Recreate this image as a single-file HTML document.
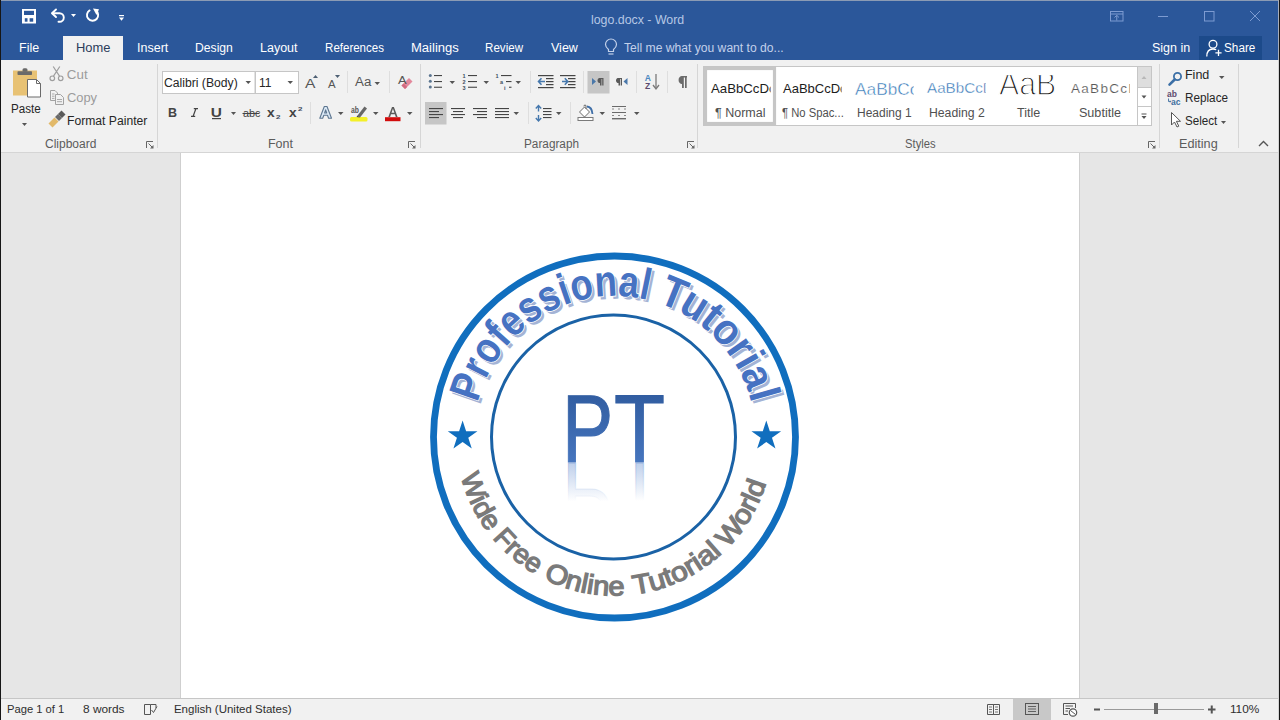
<!DOCTYPE html>
<html><head><meta charset="utf-8">
<style>
*{margin:0;padding:0;box-sizing:border-box}
html,body{width:1280px;height:720px;overflow:hidden;background:#e6e6e6;font-family:"Liberation Sans",sans-serif}
.a{position:absolute}
svg text{font-family:"Liberation Sans",sans-serif;white-space:pre}
</style></head><body>
<div class="a" style="left:0;top:0;width:1280px;height:60px;background:#2b579a"></div>
<div class="a" style="left:0;top:0;width:1280px;height:1px;background:#8b9bb4"></div>
<div class="a" style="left:0;top:60px;width:1280px;height:93px;background:#f1f1f1;border-bottom:1px solid #d5d5d5"></div>
<div class="a" style="left:180px;top:153px;width:900px;height:545px;background:#fff;border-left:1px solid #cfcfcf;border-right:1px solid #cfcfcf"></div>
<div class="a" style="left:0;top:698px;width:1280px;height:22px;background:#f1f1f1;border-top:1px solid #c6c6c6"></div>
<div class="a" style="left:63px;top:36px;width:60px;height:24px;background:#f1f1f1"></div>
<div class="a" style="left:1199px;top:36px;width:63px;height:24px;background:#1c4a8a"></div>
<div class="a" style="left:1013px;top:699px;width:38px;height:21px;background:#c8c8c8"></div>
<div class="a" style="left:0;top:0;width:1px;height:720px;background:#161616"></div>
<div class="a" style="left:1278px;top:0;width:1px;height:60px;background:#a6adbb"></div><div class="a" style="left:1278px;top:60px;width:1px;height:660px;background:#d4d4d4"></div>
<div class="a" style="left:1279px;top:0;width:1px;height:720px;background:#161616"></div>
<svg class="a" style="left:0;top:0" width="1280" height="720" viewBox="0 0 1280 720">
<defs>
<linearGradient id="ptg" x1="0" y1="0" x2="0" y2="1">
<stop offset="0" stop-color="#2b5698"/><stop offset="1" stop-color="#4c7cc6"/>
</linearGradient>
<linearGradient id="ptr" x1="0" y1="0" x2="0" y2="1">
<stop offset="0" stop-color="#5a86cc" stop-opacity="0"/><stop offset="0.45" stop-color="#5a86cc" stop-opacity="0"/><stop offset="1" stop-color="#5a86cc" stop-opacity="0.6"/>
</linearGradient>
<path id="arcTop" d="M477.69,402.89 A141,141 0 0 1 753.36,412.52"/>
<path id="arcBot" d="M460.91,476.15 A158.5,158.5 0 0 0 770.59,464.52"/>
</defs>
<circle cx="614.5" cy="437" r="181" fill="none" stroke="#106ebe" stroke-width="6.8"/>
<circle cx="613.5" cy="437" r="122" fill="none" stroke="#1a62a6" stroke-width="3"/>
<polygon fill="#106ebe" points="462.60,420.40 466.10,431.18 477.44,431.18 468.27,437.84 471.77,448.62 462.60,441.96 453.43,448.62 456.93,437.84 447.76,431.18 459.10,431.18"/>
<polygon fill="#106ebe" points="766.30,420.40 769.80,431.18 781.14,431.18 771.97,437.84 775.47,448.62 766.30,441.96 757.13,448.62 760.63,437.84 751.46,431.18 762.80,431.18"/>
<g transform="translate(2.8,2.8)"><text font-family="Liberation Sans" font-weight="bold" font-size="44" fill="#a4b3d5"><textPath href="#arcTop" startOffset="0.0" textLength="220.7" lengthAdjust="spacingAndGlyphs">Professional</textPath></text><text font-family="Liberation Sans" font-weight="bold" font-size="44" fill="#a4b3d5"><textPath href="#arcTop" startOffset="230.1" textLength="144.0" lengthAdjust="spacingAndGlyphs">Tutorial</textPath></text></g>
<text font-family="Liberation Sans" font-weight="bold" font-size="44" fill="#4672c2" stroke="#fff" stroke-width="1.6" paint-order="stroke"><textPath href="#arcTop" startOffset="0.0" textLength="220.7" lengthAdjust="spacingAndGlyphs">Professional</textPath></text><text font-family="Liberation Sans" font-weight="bold" font-size="44" fill="#4672c2" stroke="#fff" stroke-width="1.6" paint-order="stroke"><textPath href="#arcTop" startOffset="230.1" textLength="144.0" lengthAdjust="spacingAndGlyphs">Tutorial</textPath></text>
<text font-family="Liberation Sans" font-size="27" fill="#7a7a7a" stroke="#7a7a7a" stroke-width="1.3"><textPath href="#arcBot" startOffset="0.0" textLength="126.5" lengthAdjust="spacingAndGlyphs">Wide Free</textPath></text><text font-family="Liberation Sans" font-size="27" fill="#7a7a7a" stroke="#7a7a7a" stroke-width="1.3"><textPath href="#arcBot" startOffset="135.5" textLength="84" lengthAdjust="spacingAndGlyphs">Online</textPath></text><text font-family="Liberation Sans" font-size="27" fill="#7a7a7a" stroke="#7a7a7a" stroke-width="1.3"><textPath href="#arcBot" startOffset="229" textLength="99" lengthAdjust="spacingAndGlyphs">Tutorial</textPath></text><text font-family="Liberation Sans" font-size="27" fill="#7a7a7a" stroke="#7a7a7a" stroke-width="1.3"><textPath href="#arcBot" startOffset="335.0" textLength="76.6" lengthAdjust="spacingAndGlyphs">World</textPath></text>
<text transform="translate(568.3,461.5) scale(0.8,1)" x="-8" y="0" font-family="Liberation Sans" font-size="96" fill="url(#ptg)" stroke="url(#ptg)" stroke-width="1.1">P</text>
<text transform="translate(614,461.5) scale(0.87,1)" x="0" y="0" font-family="Liberation Sans" font-size="96" fill="url(#ptg)" stroke="url(#ptg)" stroke-width="1.1">T</text>
<g transform="translate(0,924) scale(1,-1)">
<text transform="translate(568.3,461.5) scale(0.8,1)" x="-8" y="0" font-family="Liberation Sans" font-size="96" fill="url(#ptr)" stroke="url(#ptr)" stroke-width="1.1">P</text>
<text transform="translate(614,461.5) scale(0.87,1)" x="0" y="0" font-family="Liberation Sans" font-size="96" fill="url(#ptr)" stroke="url(#ptr)" stroke-width="1.1">T</text>
</g>
</svg>
<svg class="a" style="left:0;top:0" width="1280" height="720" viewBox="0 0 1280 720">
<defs><clipPath id="c711"><rect x="708" y="70" width="62.60000000000002" height="30"/></clipPath><clipPath id="c783"><rect x="780" y="70" width="61.60000000000002" height="30"/></clipPath><clipPath id="c855"><rect x="852" y="70" width="61.60000000000002" height="30"/></clipPath><clipPath id="c927"><rect x="924" y="70" width="61.5" height="30"/></clipPath><clipPath id="c999"><rect x="996" y="75.2" width="66" height="25"/></clipPath><clipPath id="c1071"><rect x="1068" y="70" width="61.799999999999955" height="30"/></clipPath></defs>
<g id="icons">
<!-- ===== QAT ===== -->
<g fill="#fff">
<rect x="22" y="9" width="14" height="14.5"/>
</g>
<g fill="#2b579a">
<rect x="24" y="10.8" width="10" height="4.2"/>
<rect x="24.8" y="18.2" width="2.7" height="3.5"/>
<rect x="29.6" y="18.2" width="3.6" height="3.5"/>
</g>
<g fill="none" stroke="#fff" stroke-width="1.9" stroke-linecap="round" stroke-linejoin="round">
<path d="M56,9.5 L52,13.2 L56,17"/>
<path d="M52.5,13.2 H59.5 A4.3,4.3 0 0 1 59.5,21.8 H58.5"/>
<path d="M95.8,10.6 A5.6,5.6 0 1 1 89.6,10.4"/>
</g>
<path fill="#fff" d="M93,8.5 L99,9.2 L96.5,15 Z"/>
<path fill="#fff" d="M71,14 H76 L73.5,17 Z"/>
<rect fill="#fff" x="119" y="15" width="5" height="1.2"/>
<path fill="#fff" d="M119,17.6 H124 L121.5,20.8 Z"/>
<!-- window controls -->
<g fill="none" stroke="#7d9bd1" stroke-width="1">
<rect x="1110.5" y="11.5" width="12.5" height="9.5"/>
<path d="M1110.5,14 H1123"/>
<path d="M1116.75,20.5 V15.5 M1114.5,17.5 L1116.75,15.3 L1119,17.5"/>
<path d="M1158,16.5 H1168"/>
<rect x="1204.5" y="11.5" width="9.5" height="9.5"/>
<path d="M1250,11 L1260,21 M1260,11 L1250,21"/>
</g>
<!-- lightbulb -->
<g fill="none" stroke="#c3d1ea" stroke-width="1.2">
<path d="M608.5,51.5 V49.5 C606,47.5 605.5,45.8 605.5,44.5 A5.5,5.5 0 0 1 616.5,44.5 C616.5,45.8 616,47.5 613.5,49.5 V51.5 Z"/>
<path d="M608.5,54 H613.5"/>
</g>
<!-- share person -->
<g fill="none" stroke="#fff" stroke-width="1.3">
<circle cx="1213" cy="44.3" r="3.9"/>
<path d="M1206.8,56.5 C1206.8,51.8 1209.3,49 1213,49 C1214.2,49 1215.3,49.3 1216.2,49.8"/>
<path d="M1218.5,49.8 V56 M1215.4,52.9 H1221.6"/>
</g>
<!-- ===== Clipboard group ===== -->
<rect x="13" y="70.5" width="24" height="25" fill="#e8c274"/>
<rect x="17.5" y="71.2" width="14.5" height="3.8" fill="#6a6a6a" rx="0.8"/>
<rect x="22.5" y="68.2" width="5" height="3.5" fill="#6a6a6a" rx="1.5"/>
<path d="M27.5,79.5 H36.5 L40.5,83.5 V97 H27.5 Z" fill="#fff" stroke="#6a6a6a" stroke-width="1"/>
<path d="M36.5,79.5 V83.5 H40.5" fill="none" stroke="#6a6a6a" stroke-width="1"/>
<path fill="#555" d="M22,123 H27 L24.5,126 Z"/>
<!-- scissors -->
<g fill="none" stroke="#9e9e9e" stroke-width="1.2">
<circle cx="52.3" cy="78.3" r="2.3"/>
<circle cx="60.7" cy="78.3" r="2.3"/>
<path d="M53.5,76.2 L59.8,66.5 M59.5,76.2 L53.2,66.5"/>
</g>
<!-- copy -->
<g fill="none" stroke="#a2a2a2" stroke-width="1">
<path d="M50.5,90.5 H55 L57.5,93 V100.5 H50.5 Z"/>
<path d="M55.5,94.5 H60.5 L63.5,97.5 V104.5 H55.5 Z" fill="#f1f1f1"/>
<path d="M52,94 H54.5 M52,96.2 H54.5 M52,98.4 H54.5 M57,99.5 H62 M57,101.7 H62" stroke-width="0.9"/>
</g>
<!-- format painter -->
<path d="M48.5,123.5 L54.5,117.5 L58.5,121.5 L52.5,127.5 Z" fill="#e2b96a"/>
<path d="M55,117 L58,114 L62,118 L59,121 Z" fill="#6a6a6a"/>
<path d="M58,114 L61.5,110.5 L65.5,114.5 L62,118 Z" fill="#5a5a5a"/>
<!-- ===== Font group ===== -->
<rect x="162.5" y="71.5" width="92.5" height="22" fill="#fff" stroke="#c6c6c6"/>
<rect x="255.5" y="71.5" width="43" height="22" fill="#fff" stroke="#c6c6c6"/>
<path fill="#555" d="M245.5,81 H251 L248.25,84 Z"/>
<path fill="#555" d="M287.5,81 H293 L290.25,84 Z"/>
<path fill="#4d5f73" d="M313,78 L315.5,75 L318,78 Z"/>
<path fill="#4d5f73" d="M335,75 H340 L337.5,78 Z"/>
<path fill="#555" d="M374.5,82 H380 L377.25,85 Z"/>
<!-- eraser -->
<path d="M401.5,85.5 L409,78 L412.5,81.5 L405,89 Z" fill="#e3889b"/>
<path d="M401.5,85.5 L403.6,83.4 L407.1,86.9 L405,89 Z" fill="#d16a80"/>
<!-- text effects A -->
<path d="M319.8,118.3 L324.3,106.5 H327 L331.5,118.3 H328.6 L327.5,115.3 H323.8 L322.7,118.3 Z M324.6,113 H326.7 L325.65,109.8 Z" fill="#dbe9f6" stroke="#5d7690" stroke-width="1.1" stroke-linejoin="round"/>
<!-- highlighter -->
<rect x="350" y="117" width="17.5" height="4.5" fill="#f4f028" rx="1.5"/>
<path d="M357.5,115.5 L364.5,106.5 L367,108.5 L360,117.5 Z" fill="#676767"/>
<path d="M356.5,117 L357.5,115.5 L360,117.5 Z" fill="#444"/>
<!-- font color -->
<rect x="385" y="117.2" width="15.5" height="4" fill="#d20c0c"/>
<path d="M388.3,117 L392,107 H393.9 L397.6,117 H395.8 L394.9,114.2 H391 L390.1,117 Z M391.5,112.7 H394.4 L392.95,108.7 Z" fill="#5a5a5a"/>
<!-- arrows row 2 -->
<g fill="#555">
<path d="M231,112 H236 L233.5,115 Z"/>
<path d="M338,112 H343.5 L340.75,115 Z"/>
<path d="M373,112 H378.5 L375.75,115 Z"/>
<path d="M407,112 H412.5 L409.75,115 Z"/>
</g>
<path d="M193.8,108.6 H198 M195.9,108.6 L193.1,116.4 M191,116.4 H195.2" fill="none" stroke="#444" stroke-width="1.3"/>
<!-- strikethrough line / underline -->
<rect x="212" y="118" width="9" height="1.2" fill="#444"/>
<rect x="242.5" y="113" width="17" height="1" fill="#444"/>
<!-- separators -->
<g fill="#d6d6d6">
<rect x="157" y="64" width="1" height="84"/>
<rect x="420" y="64" width="1" height="84"/>
<rect x="697" y="64" width="1" height="84"/>
<rect x="1159" y="64" width="1" height="84"/>
<rect x="1238" y="64" width="1" height="84"/>
</g>
<g fill="#dedede">
<rect x="347" y="71" width="1" height="22"/>
<rect x="389" y="71" width="1" height="22"/>
<rect x="310" y="102" width="1" height="22"/>
<rect x="530" y="71" width="1" height="22"/>
<rect x="583" y="71" width="1" height="22"/>
<rect x="636" y="71" width="1" height="22"/>
<rect x="667" y="71" width="1" height="22"/>
<rect x="528" y="102" width="1" height="22"/>
<rect x="570" y="102" width="1" height="22"/>
</g>
<!-- dialog launchers -->
<g fill="none" stroke="#666" stroke-width="1">
<path d="M146.5,148 V141.5 H153"/><path d="M148.5,143.5 L153,148"/>
<path d="M408.5,148 V141.5 H415"/><path d="M410.5,143.5 L415,148"/>
<path d="M687.5,148 V141.5 H694"/><path d="M689.5,143.5 L694,148"/>
<path d="M1148.5,148 V141.5 H1155"/><path d="M1150.5,143.5 L1155,148"/>
</g>
<g fill="#666">
<path d="M150,148.5 H153.5 V145 Z"/><path d="M412,148.5 H415.5 V145 Z"/><path d="M691,148.5 H694.5 V145 Z"/><path d="M1152,148.5 H1155.5 V145 Z"/>
</g>
<path d="M1259,146 L1263.5,141.5 L1268,146" fill="none" stroke="#555" stroke-width="1.4"/>
<!-- ===== Paragraph group ===== -->
<g fill="#5b7590">
<circle cx="430.3" cy="75.5" r="1.5"/><circle cx="430.3" cy="81.3" r="1.5"/><circle cx="430.3" cy="87.1" r="1.5"/>
</g>
<g fill="#454545">
<rect x="434" y="75" width="8" height="1.1"/><rect x="434" y="81" width="8" height="1.1"/><rect x="434" y="86.7" width="8" height="1.1"/>
<rect x="468" y="75" width="9" height="1.1"/><rect x="468" y="81" width="9" height="1.1"/><rect x="468" y="86.7" width="9" height="1.1"/>
<rect x="501" y="75" width="10.5" height="1.1"/><rect x="506" y="81" width="5.5" height="1.1"/><rect x="509" y="86.7" width="2.5" height="1.1"/>
</g>
<g font-size="5.5" fill="#3d4d5e" font-weight="bold">
<text x="462.5" y="78.3">1</text><text x="462.5" y="84.2">2</text><text x="462.5" y="90">3</text>
<text x="495.5" y="78.3">1</text><text x="500" y="84.2">a</text><text x="504" y="90">i</text>
</g>
<g fill="#555">
<path d="M449.5,81 H455 L452.25,84 Z"/><path d="M483.5,81 H489 L486.25,84 Z"/><path d="M515.5,81 H521 L518.25,84 Z"/>
</g>
<!-- indents -->
<g fill="#454545">
<rect x="538" y="75" width="15.5" height="1.2"/><rect x="546" y="78" width="7.5" height="1.2"/><rect x="546" y="81" width="7.5" height="1.2"/><rect x="546" y="84" width="7.5" height="1.2"/><rect x="538" y="87" width="15.5" height="1.2"/>
<rect x="560" y="75" width="15.5" height="1.2"/><rect x="568" y="78" width="7.5" height="1.2"/><rect x="568" y="81" width="7.5" height="1.2"/><rect x="568" y="84" width="7.5" height="1.2"/><rect x="560" y="87" width="15.5" height="1.2"/>
</g>
<g fill="none" stroke="#4678ad" stroke-width="1.6">
<path d="M541.5,78.2 L538.5,81.5 L541.5,84.8 M539,81.5 H545"/>
<path d="M562,81.5 H568 M564.8,78.2 L567.8,81.5 L564.8,84.8"/>
</g>
<!-- LTR/RTL -->
<rect x="587.5" y="71" width="22" height="22.5" fill="#c6c6c6"/>
<path d="M592,78 L596,81.5 L592,85 Z" fill="#4a78aa"/>
<path d="M603.5,78 H599 A2.8,2.8 0 0 0 599,83 H600 V85.5 H601.5 V79 H602.2 V85.5 H603.5 Z" fill="#5a5a5a"/>
<path d="M622,78 H617.5 A2.8,2.8 0 0 0 617.5,83 H618.5 V85.5 H620 V79 H620.7 V85.5 H622 Z" fill="#5a5a5a"/>
<path d="M627.5,78 L623.5,81.5 L627.5,85 Z" fill="#4a78aa"/>
<!-- sort -->
<text x="644.8" y="80.8" font-size="8.5" font-weight="bold" fill="#4b87c0">A</text>
<text x="645" y="89" font-size="8.5" font-weight="bold" fill="#5a4a6e">Z</text>
<path d="M656,74 V88" stroke="#7a7a7a" stroke-width="1.3"/>
<path d="M653,85 L656,89 L659,85" fill="none" stroke="#7a7a7a" stroke-width="1.3"/>
<!-- pilcrow -->
<path d="M687,76 H681.5 A4.2,4.2 0 0 0 681.5,84 H682 V88 H683.8 V77.6 H685 V88 H686.7 V77.6 H687 Z" fill="#6b6b6b"/>
<!-- align row -->
<rect x="425" y="102" width="21.5" height="22.5" fill="#c6c6c6"/>
<g fill="#454545">
<rect x="429" y="108" width="14" height="1.1"/><rect x="429" y="111" width="10" height="1.1"/><rect x="429" y="114" width="14" height="1.1"/><rect x="429" y="117" width="10" height="1.1"/>
<rect x="451" y="108" width="14" height="1.1"/><rect x="453" y="111" width="10" height="1.1"/><rect x="451" y="114" width="14" height="1.1"/><rect x="453" y="117" width="10" height="1.1"/>
<rect x="473" y="108" width="14" height="1.1"/><rect x="477" y="111" width="10" height="1.1"/><rect x="473" y="114" width="14" height="1.1"/><rect x="477" y="117" width="10" height="1.1"/>
<rect x="495" y="108" width="14" height="1.1"/><rect x="495" y="111" width="14" height="1.1"/><rect x="495" y="114" width="14" height="1.1"/><rect x="495" y="117" width="14" height="1.1"/>
<rect x="543" y="108" width="8.5" height="1.1"/><rect x="543" y="111" width="8.5" height="1.1"/><rect x="543" y="114" width="8.5" height="1.1"/><rect x="543" y="117" width="8.5" height="1.1"/>
</g>
<g fill="#555">
<path d="M513.5,112 H519 L516.25,115 Z"/><path d="M556,112 H561.5 L558.75,115 Z"/><path d="M599.5,112 H605 L602.25,115 Z"/><path d="M634,112 H639.5 L636.75,115 Z"/>
</g>
<g fill="none" stroke="#4678ad" stroke-width="1.4">
<path d="M538.5,106 V111.5 M535.8,108.5 L538.5,105.5 L541.2,108.5 M538.5,115 V120.5 M535.8,118 L538.5,121 L541.2,118"/>
</g>
<!-- shading -->
<rect x="578" y="117.5" width="15" height="3" fill="#fff" stroke="#7a7a7a" stroke-width="1"/>
<path d="M579.5,112 L584.5,107 L589.5,112 L584.5,117 Z" fill="#fff" stroke="#6a6a6a" stroke-width="1"/>
<path d="M584,106.5 V105.5 A1.5,1.5 0 0 1 586,105.5 V109" fill="none" stroke="#6a6a6a" stroke-width="1"/>
<path d="M587,106.5 Q592,107 592.5,114" fill="none" stroke="#3f6fa8" stroke-width="1.8"/>
<!-- borders -->
<g fill="#6a6a6a">
<rect x="612" y="106" width="14" height="1"/>
<rect x="612" y="112" width="14" height="1"/>
<rect x="612" y="118" width="14" height="1.4"/>
</g>
<g fill="#8a8a8a">
<rect x="612" y="108.5" width="2" height="1"/><rect x="618" y="108.5" width="2" height="1"/><rect x="624" y="108.5" width="2" height="1"/>
<rect x="612" y="115" width="2" height="1"/><rect x="618" y="115" width="2" height="1"/><rect x="624" y="115" width="2" height="1"/>
</g>
<!-- ===== Styles gallery ===== -->
<rect x="703.5" y="66.5" width="448" height="59" fill="#fff" stroke="#c6c6c6"/>
<rect x="705.5" y="68.5" width="69" height="55" fill="none" stroke="#c6c6c6" stroke-width="3.2"/>
<rect x="1137" y="67" width="14" height="20" fill="#dedede"/>
<g fill="none" stroke="#c6c6c6" stroke-width="1">
<path d="M1137.5,67 V125 M1137,87.5 H1151 M1137,106.5 H1151"/>
</g>
<path fill="#b8b8b8" d="M1141.5,79 H1146.5 L1144,76 Z"/>
<path fill="#555" d="M1141.5,95.5 H1146.5 L1144,98.5 Z"/>
<rect x="1141.5" y="113.5" width="5" height="1" fill="#555"/>
<path fill="#555" d="M1141.5,116 H1146.5 L1144,119 Z"/>
<!-- ===== Editing ===== -->
<g fill="none" stroke="#3b6fa6">
<circle cx="1177.5" cy="76.5" r="3.6" stroke-width="1.8"/>
<path d="M1174.7,79.5 L1169.5,84.7" stroke-width="2.6" stroke-linecap="round"/>
</g>
<path fill="#555" d="M1219,76 H1224.5 L1221.75,79 Z"/>
<path fill="#555" d="M1221,121 H1226 L1223.5,124 Z"/>
<text x="1167" y="97" font-size="8.5" fill="#5f4b6e" font-weight="bold">ab</text>
<text x="1171" y="104.5" font-size="8.5" fill="#3f6fa0" font-weight="bold">ac</text>
<path d="M1168.5,98.5 V101.5 H1170.8 M1169.8,100.6 L1170.8,101.5 L1169.8,102.4" fill="none" stroke="#3f6fa0" stroke-width="0.9"/>
<path d="M1171.5,112.5 V125 L1174.5,122 L1177,127 L1178.8,126.2 L1176.4,121.3 L1180.5,121.3 Z" fill="#fff" stroke="#555" stroke-width="1" stroke-linejoin="round"/>
<!-- ===== Status bar ===== -->
<g fill="none" stroke="#555" stroke-width="1">
<path d="M144.5,704.5 H150.5 V714.5 H144.5 Z M150.5,704.5 H156 V708"/>
<path d="M151.5,710 L153.5,712.5 L157,706.5"/>
</g>
<g fill="none" stroke="#555" stroke-width="1">
<path d="M987.5,704.5 H993.5 V714.5 H987.5 Z M993.5,704.5 H999.5 V714.5 H993.5 Z"/>
<path d="M989,707 H992 M989,709.5 H992 M989,712 H992 M995,707 H998 M995,709.5 H998 M995,712 H998" stroke-width="0.8"/>
<rect x="1025.5" y="703.5" width="13" height="11"/>
<path d="M1028,706.5 H1036 M1028,709 H1036 M1028,711.5 H1036" stroke-width="0.9"/>
<path d="M1068,714.5 H1063.5 V703.5 H1075.5 V708"/>
<path d="M1065.5,706 H1073 M1065.5,708.5 H1070 M1065.5,711 H1068" stroke-width="1"/>
</g>
<circle cx="1073" cy="712.5" r="3.7" fill="#fff" stroke="#555" stroke-width="1.2"/>
<path d="M1070.5,710.5 L1075.5,714.5" stroke="#555" stroke-width="1"/>
<rect x="1094" y="708.5" width="6" height="2" fill="#555"/>
<rect x="1104" y="709" width="100" height="1" fill="#9a9a9a"/>
<rect x="1154" y="703" width="4" height="11" fill="#6a6a6a"/>
<rect x="1208" y="708.5" width="7.5" height="2" fill="#555"/>
<rect x="1210.75" y="705.5" width="2" height="8" fill="#555"/>
</g>

<text x="591.01" y="24" font-size="12.5" font-weight="normal" fill="#b6c7e5" textLength="93.25" lengthAdjust="spacingAndGlyphs">logo.docx - Word</text><text x="19.00" y="52" font-size="12.5" font-weight="normal" fill="#ffffff" textLength="20.16" lengthAdjust="spacingAndGlyphs">File</text><text x="75.97" y="52" font-size="12.5" font-weight="normal" fill="#2b3c5a" textLength="34.39" lengthAdjust="spacingAndGlyphs">Home</text><text x="137.00" y="52" font-size="12.5" font-weight="normal" fill="#ffffff" textLength="31.27" lengthAdjust="spacingAndGlyphs">Insert</text><text x="195.03" y="52" font-size="12.5" font-weight="normal" fill="#ffffff" textLength="37.87" lengthAdjust="spacingAndGlyphs">Design</text><text x="260.00" y="52" font-size="12.5" font-weight="normal" fill="#ffffff" textLength="37.53" lengthAdjust="spacingAndGlyphs">Layout</text><text x="325.08" y="52" font-size="12.5" font-weight="normal" fill="#ffffff" textLength="58.86" lengthAdjust="spacingAndGlyphs">References</text><text x="410.95" y="52" font-size="12.5" font-weight="normal" fill="#ffffff" textLength="47.94" lengthAdjust="spacingAndGlyphs">Mailings</text><text x="485.07" y="52" font-size="12.5" font-weight="normal" fill="#ffffff" textLength="37.93" lengthAdjust="spacingAndGlyphs">Review</text><text x="551.00" y="52" font-size="12.5" font-weight="normal" fill="#ffffff" textLength="26.88" lengthAdjust="spacingAndGlyphs">View</text><text x="624.00" y="52" font-size="12.5" font-weight="normal" fill="#c3d1ea" textLength="159.65" lengthAdjust="spacingAndGlyphs">Tell me what you want to do...</text><text x="1152.00" y="52" font-size="12.5" font-weight="normal" fill="#ffffff" textLength="38.23" lengthAdjust="spacingAndGlyphs">Sign in</text><text x="1224.06" y="52" font-size="12.5" font-weight="normal" fill="#ffffff" textLength="31.27" lengthAdjust="spacingAndGlyphs">Share</text><text x="11.03" y="113" font-size="12" font-weight="normal" fill="#262626" textLength="29.63" lengthAdjust="spacingAndGlyphs">Paste</text><text x="66.89" y="79" font-size="12" font-weight="normal" fill="#9c9c9c" textLength="20.76" lengthAdjust="spacingAndGlyphs">Cut</text><text x="66.93" y="102" font-size="12" font-weight="normal" fill="#9c9c9c" textLength="30.09" lengthAdjust="spacingAndGlyphs">Copy</text><text x="66.99" y="125" font-size="12" font-weight="normal" fill="#262626" textLength="80.38" lengthAdjust="spacingAndGlyphs">Format Painter</text><text x="45.00" y="148" font-size="12" font-weight="normal" fill="#5c5c5c" textLength="51.38" lengthAdjust="spacingAndGlyphs">Clipboard</text><text x="163.99" y="87" font-size="12" font-weight="normal" fill="#262626" textLength="73.71" lengthAdjust="spacingAndGlyphs">Calibri (Body)</text><text x="259.00" y="87" font-size="12" font-weight="normal" fill="#262626" textLength="12.47" lengthAdjust="spacingAndGlyphs">11</text><text x="267.96" y="148" font-size="12" font-weight="normal" fill="#5c5c5c" textLength="25.06" lengthAdjust="spacingAndGlyphs">Font</text><text x="524.02" y="148" font-size="12" font-weight="normal" fill="#5c5c5c" textLength="55.01" lengthAdjust="spacingAndGlyphs">Paragraph</text><text x="905.06" y="148" font-size="12" font-weight="normal" fill="#5c5c5c" textLength="30.58" lengthAdjust="spacingAndGlyphs">Styles</text><text x="1178.94" y="148" font-size="12" font-weight="normal" fill="#5c5c5c" textLength="38.80" lengthAdjust="spacingAndGlyphs">Editing</text><text x="1184.95" y="79" font-size="12" font-weight="normal" fill="#262626" textLength="24.40" lengthAdjust="spacingAndGlyphs">Find</text><text x="1185.02" y="102" font-size="12" font-weight="normal" fill="#262626" textLength="43.01" lengthAdjust="spacingAndGlyphs">Replace</text><text x="1185.03" y="125" font-size="12" font-weight="normal" fill="#262626" textLength="32.32" lengthAdjust="spacingAndGlyphs">Select</text><text x="711.00" y="93" font-size="13" font-weight="normal" fill="#1c1c1c" textLength="64.59" lengthAdjust="spacingAndGlyphs" clip-path="url(#c711)">AaBbCcDc</text><text x="715.00" y="117" font-size="12" font-weight="normal" fill="#505050" textLength="50.47" lengthAdjust="spacingAndGlyphs">¶ Normal</text><text x="783.00" y="93" font-size="13" font-weight="normal" fill="#1c1c1c" textLength="63.58" lengthAdjust="spacingAndGlyphs" clip-path="url(#c783)">AaBbCcDc</text><text x="782.00" y="117" font-size="12" font-weight="normal" fill="#505050" textLength="61.76" lengthAdjust="spacingAndGlyphs">¶ No Spac...</text><text x="855.00" y="95" font-size="17" font-weight="normal" fill="#2e74b5" textLength="63.38" lengthAdjust="spacingAndGlyphs" clip-path="url(#c855)" stroke="#fff" stroke-width="0.45" paint-order="fill">AaBbCc</text><text x="857.00" y="117" font-size="12" font-weight="normal" fill="#505050" textLength="54.72" lengthAdjust="spacingAndGlyphs">Heading 1</text><text x="927.00" y="93" font-size="14.5" font-weight="normal" fill="#2e74b5" textLength="66.70" lengthAdjust="spacingAndGlyphs" clip-path="url(#c927)" stroke="#fff" stroke-width="0.35" paint-order="fill">AaBbCcD</text><text x="928.98" y="117" font-size="12" font-weight="normal" fill="#505050" textLength="55.75" lengthAdjust="spacingAndGlyphs">Heading 2</text><text x="999.00" y="95" font-size="34" font-weight="normal" fill="#161616" textLength="57.12" lengthAdjust="spacingAndGlyphs" clip-path="url(#c999)" stroke="#fff" stroke-width="1.4" paint-order="fill">AaB</text><text x="1017.00" y="117" font-size="12" font-weight="normal" fill="#505050" textLength="23.25" lengthAdjust="spacingAndGlyphs">Title</text><text x="1071.00" y="93" font-size="12.5" font-weight="normal" fill="#595959" letter-spacing="1.2" textLength="68.40" lengthAdjust="spacingAndGlyphs" clip-path="url(#c1071)" stroke="#fff" stroke-width="0.15" paint-order="fill">AaBbCcD</text><text x="1078.95" y="117" font-size="12" font-weight="normal" fill="#505050" textLength="42.08" lengthAdjust="spacingAndGlyphs">Subtitle</text><text x="168.00" y="117" font-size="12.5" font-weight="bold" fill="#444444" textLength="9.03" lengthAdjust="spacingAndGlyphs">B</text><text x="210.71" y="117" font-size="12" font-weight="bold" fill="#444444" textLength="11.15" lengthAdjust="spacingAndGlyphs">U</text><text x="243.00" y="117" font-size="11.5" font-weight="normal" fill="#444444" textLength="17.52" lengthAdjust="spacingAndGlyphs">abc</text><text x="267.00" y="117" font-size="12" font-weight="bold" fill="#444444" textLength="7.64" lengthAdjust="spacingAndGlyphs">x</text><text x="276.00" y="119" font-size="6" font-weight="bold" fill="#3d4d5e" textLength="4.46" lengthAdjust="spacingAndGlyphs">2</text><text x="289.00" y="117" font-size="12" font-weight="bold" fill="#444444" textLength="7.64" lengthAdjust="spacingAndGlyphs">x</text><text x="298.00" y="111" font-size="6" font-weight="bold" fill="#3d4d5e" textLength="4.46" lengthAdjust="spacingAndGlyphs">2</text><text x="305.00" y="88" font-size="12.5" font-weight="normal" fill="#555555" textLength="10.43" lengthAdjust="spacingAndGlyphs">A</text><text x="328.00" y="88" font-size="10" font-weight="normal" fill="#555555" textLength="7.62" lengthAdjust="spacingAndGlyphs">A</text><text x="355.00" y="86" font-size="12.5" font-weight="normal" fill="#555555" textLength="16.32" lengthAdjust="spacingAndGlyphs">Aa</text><text x="398.00" y="84" font-size="10" font-weight="normal" fill="#555555" textLength="8.58" lengthAdjust="spacingAndGlyphs">A</text><text x="351.00" y="113" font-size="8.5" font-weight="bold" fill="#555555" textLength="7.94" lengthAdjust="spacingAndGlyphs">ab</text><text x="6.98" y="713" font-size="11" font-weight="normal" fill="#2e2e2e" textLength="57.30" lengthAdjust="spacingAndGlyphs">Page 1 of 1</text><text x="83.00" y="713" font-size="11" font-weight="normal" fill="#2e2e2e" textLength="41.57" lengthAdjust="spacingAndGlyphs">8 words</text><text x="173.95" y="713" font-size="11" font-weight="normal" fill="#2e2e2e" textLength="117.57" lengthAdjust="spacingAndGlyphs">English (United States)</text><text x="1229.92" y="713" font-size="11" font-weight="normal" fill="#2e2e2e" textLength="29.43" lengthAdjust="spacingAndGlyphs">110%</text>
</svg>
</body></html>
